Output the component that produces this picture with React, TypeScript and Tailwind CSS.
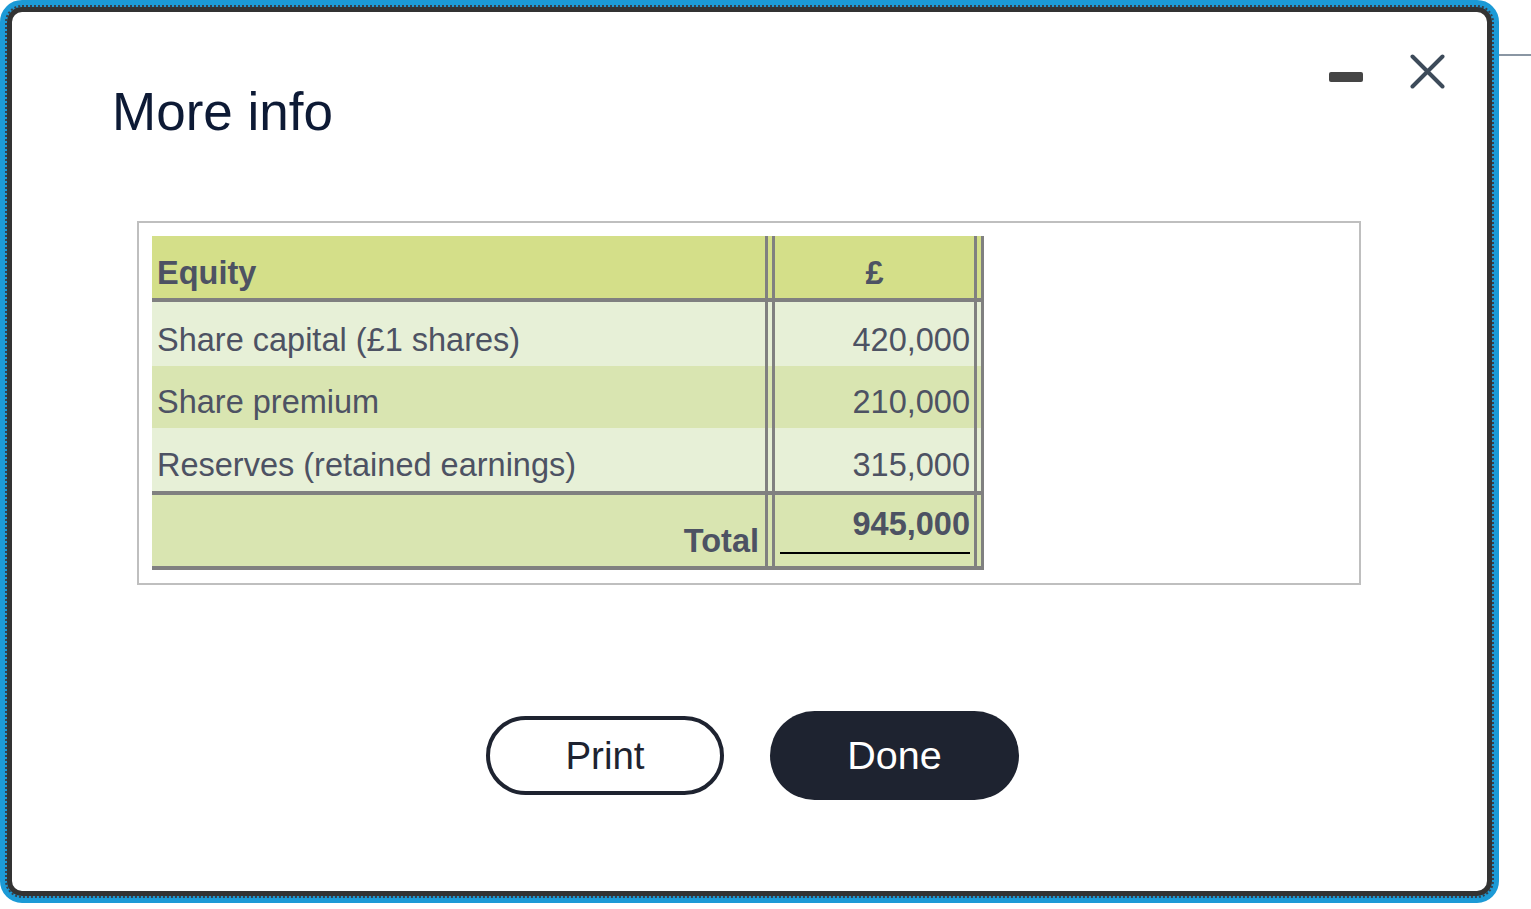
import React from "react";

interface Row {
    label: string;
    value: string;
    bg: string;
    h: string;
}

const rows: Row[] = [
    { label: "Share capital (£1 shares)", value: "420,000", bg: "bg-[#e7f0d7]", h: "h-[64px]" },
    { label: "Share premium", value: "210,000", bg: "bg-[#d9e5b1]", h: "h-[62px]" },
    { label: "Reserves (retained earnings)", value: "315,000", bg: "bg-[#e7f0d7]", h: "h-[63px]" },
];

function Separator() {
    return <div className="h-[4px] w-full bg-[#808080]" />;
}

function EquityTable() {
    return (
        <div className="w-[832px] text-[32.5px] leading-[37px] text-[#4d5263]">
            {/* Header */}
            <div className="flex h-[62px] bg-[#d4df89] font-bold">
                <div className="w-[616px] border-r-[3px] border-[#808080] flex items-end pl-[5px] pb-[6px]">
                    Equity
                </div>
                <div className="w-[4px]" />
                <div className="w-[205px] border-x-[3px] border-[#808080] flex items-end justify-center pb-[6px]">
                    £
                </div>
                <div className="w-[7px] border-r-[3px] border-[#808080]" />
            </div>
            <Separator />

            {/* Lines */}
            {rows.map((row) => (
                <div key={row.label} className={`flex ${row.h} ${row.bg}`}>
                    <div className="w-[616px] border-r-[3px] border-[#808080] flex items-end pl-[5px] pb-[7px]">
                        {row.label}
                    </div>
                    <div className="w-[4px]" />
                    <div className="w-[205px] border-x-[3px] border-[#808080] flex items-end justify-end pr-[4px] pb-[7px]">
                        {row.value}
                    </div>
                    <div className="w-[7px] border-r-[3px] border-[#808080]" />
                </div>
            ))}
            <Separator />

            {/* Total */}
            <div className="flex h-[71px] bg-[#d9e5b1] font-bold">
                <div className="w-[616px] border-r-[3px] border-[#808080] flex items-end justify-end pr-[6px] pb-[6px]">
                    Total
                </div>
                <div className="w-[4px]" />
                <div className="w-[205px] border-x-[3px] border-[#808080] flex items-end pb-[12px]">
                    <div className="w-[190px] ml-[5px] text-right pb-[9px] border-b-2 border-black">
                        945,000
                    </div>
                </div>
                <div className="w-[7px] border-r-[3px] border-[#808080]" />
            </div>
            <Separator />
        </div>
    );
}

export default function App() {
    return (
        <div className="flex bg-white min-h-[909px]" style={{ fontFamily: '"Liberation Sans", Arial, sans-serif' }}>
            <div className="w-[1499px] h-[903px] shrink-0 rounded-[22px] border-[5px] border-[#1c9ad6] bg-[#1c9ad6]">
                <div className="h-full rounded-[17px] border-2 border-dotted border-[#3a3f4a]">
                    <div className="h-full rounded-[15px] border-[5px] border-[#333333] bg-white">
                        {/* Header */}
                        <div className="flex items-start pl-[100px] pr-[42px]">
                            <h2 className="mt-[70px] text-[53px] leading-[60px] text-[#0d1a35]">More info</h2>
                            <div className="flex-1" />
                            <button className="mt-[60px] w-[34px] h-[10px] rounded-[2px] bg-[#454545]" aria-label="Minimize" />
                            <button className="mt-[42px] ml-[47px] w-[35px] h-[35px]" aria-label="Close">
                                <svg width="35" height="35" viewBox="0 0 35 35">
                                    <path d="M2.5 2.5 L32.5 32.5 M32.5 2.5 L2.5 32.5" stroke="#3d4b5a" strokeWidth="4" strokeLinecap="round" fill="none" />
                                </svg>
                            </button>
                        </div>

                        {/* Content */}
                        <div className="mt-[79px] ml-[125px] w-[1224px] border-2 border-[#bfbfbf] p-[13px]">
                            <EquityTable />
                        </div>

                        {/* Actions */}
                        <div className="mt-[126px] flex items-center justify-center gap-[46px] pl-[6px]">
                            <button className="w-[238px] h-[79px] rounded-full border-4 border-[#1e2330] text-[38.5px] text-[#1e2330] flex items-center justify-center">
                                Print
                            </button>
                            <button className="w-[249px] h-[89px] rounded-full bg-[#1e2330] text-[39.5px] text-white flex items-center justify-center">
                                Done
                            </button>
                        </div>
                    </div>
                </div>
            </div>
            <div className="flex-1">
                <div className="mt-[54px] h-[2px] bg-[#8a96a3]" />
            </div>
        </div>
    );
}
